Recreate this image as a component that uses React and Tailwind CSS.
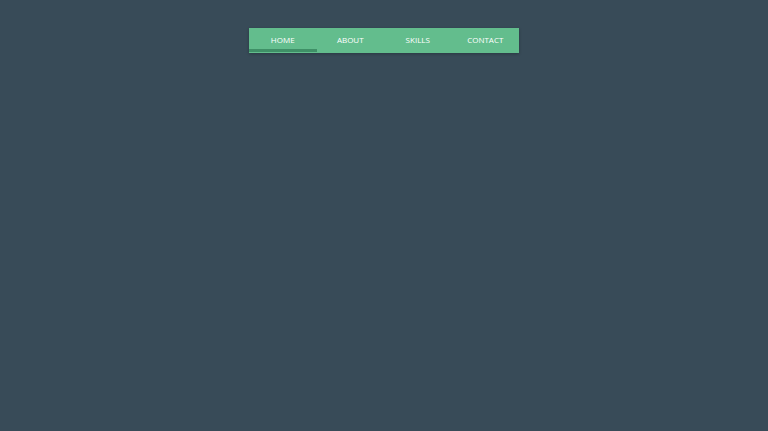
const items = ["Home", "About", "Skills", "Contact"];

export default function App() {
    const active = 0;

    return (
        <div
            className="min-h-[431px] w-full bg-[#384b58] pt-[28px] flex justify-center"
            style={{ fontFamily: '"Open Sans", "Liberation Sans", sans-serif' }}
        >
            <nav className="flex h-[25px] w-[270px] bg-[#63bd8d] shadow-[0_1px_3px_rgba(0,0,0,0.25)] relative">
                {items.map((item, i) => (
                    <a
                        key={item}
                        href="#"
                        className="relative flex-1 flex items-center justify-center pb-[2px] text-[8px] uppercase text-white"
                    >
                        {item}
                        {i === active && (
                            <span className="absolute left-0 right-0 bottom-[1px] h-[3px] bg-[#3f9067]" />
                        )}
                    </a>
                ))}
            </nav>
        </div>
    );
}
